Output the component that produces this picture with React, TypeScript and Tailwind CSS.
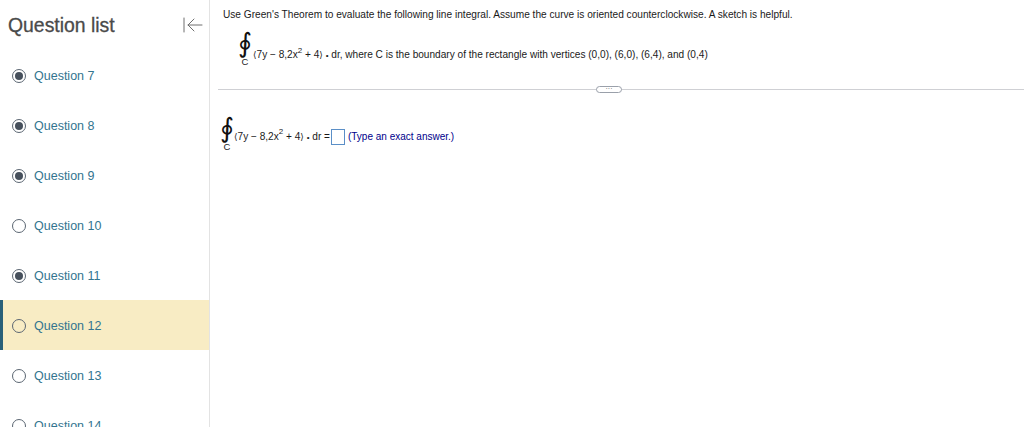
import { ArrowLeftToLine } from 'lucide-react'

const questions = [
  { n: 7, done: true },
  { n: 8, done: true },
  { n: 9, done: true },
  { n: 10, done: false },
  { n: 11, done: true },
  { n: 12, done: false, current: true },
  { n: 13, done: false },
  { n: 14, done: false },
]

function Radio({ done }: { done: boolean }) {
  return (
    <span className="flex h-[14px] w-[14px] shrink-0 items-center justify-center rounded-full border-[1.75px] border-[#5b6672]">
      {done && <span className="h-[8px] w-[8px] rounded-full bg-[#46505c]" />}
    </span>
  )
}

function Integral() {
  return (
    <span className="flex w-[14px] shrink-0 flex-col items-center">
      <span className="font-['DejaVu_Sans'] text-[27px] leading-[28px] text-[#111]">∮</span>
      <span className="text-[9.5px] leading-[9px]">C</span>
    </span>
  )
}

function Expr({ tight }: { tight?: boolean }) {
  return (
    <span className="whitespace-pre text-[10.1px] leading-[12px]">
      <span className="font-['DejaVu_Sans'] text-[9px]">⟨</span>7y − 8,2x<sup className="relative top-[-1px] align-super text-[8px] leading-[0]">2</sup> + 4<span className="font-['DejaVu_Sans'] text-[9px]">⟩</span> <span className="text-[8px]">•</span> {tight ? 'dr =' : 'dr, where C is the boundary of the rectangle with vertices (0,0), (6,0), (6,4), and (0,4)'}
    </span>
  )
}

export default function App() {
  return (
    <div className="flex h-[427px] w-[1024px] overflow-hidden bg-white font-['Liberation_Sans',sans-serif] text-[#1a1a1a]">
      <aside className="w-[210px] shrink-0 overflow-hidden border-r border-[#e3e3e3]">
        <div className="flex h-[50px] items-center justify-between pl-2 pr-[4px]">
          <h2 className="pt-[2px] text-[19.4px] font-medium text-[#4a4a4a] [-webkit-text-stroke:0.3px_#4a4a4a]">Question list</h2>
          <ArrowLeftToLine className="h-[24px] w-[24px] text-[#6e6e6e]" strokeWidth={1} />
        </div>
        {questions.map((q) => (
          <div
            key={q.n}
            className={`flex h-[50px] items-center gap-2 pt-[2px] pl-[12px] ${q.current ? 'border-l-[3px] border-[#2a6079] bg-[#f8ecc4] !pl-[9px]' : ''}`}
          >
            <Radio done={q.done} />
            <span className="pt-px text-[12.5px] text-[#33758f]">Question {q.n}</span>
          </div>
        ))}
      </aside>
      <main className="min-w-0 flex-1">
        <div className="px-[13px] pt-[9px] text-[10.15px] leading-[12px]">
          Use Green's Theorem to evaluate the following line integral. Assume the curve is oriented counterclockwise. A sketch is helpful.
        </div>
        <div className="mt-2 flex items-start pl-[28px]">
          <Integral />
          <span className="mt-[12px] pl-[1px]"><Expr /></span>
        </div>
        <div className="relative mt-[23px] ml-[8px] h-px bg-[#cfd0d4]">
          <span className="absolute left-[378px] top-[-3px] flex h-[7px] w-[26px] items-center justify-center rounded-full border border-[#9aa0aa] bg-white text-[7px] leading-none text-[#555]">
            <span className="mt-[-3px]">···</span>
          </span>
        </div>
        <div className="mt-[24px] flex items-start pl-[10px]">
          <Integral />
          <span className="mt-[15px] flex items-center">
            <Expr tight />
            <span className="ml-[1px] h-[16px] w-[14px] border border-[#5b8fc7] bg-white" />
            <span className="ml-[3px] text-[10px] leading-[12px] text-[#00008b]">(Type an exact answer.)</span>
          </span>
        </div>
      </main>
    </div>
  )
}
